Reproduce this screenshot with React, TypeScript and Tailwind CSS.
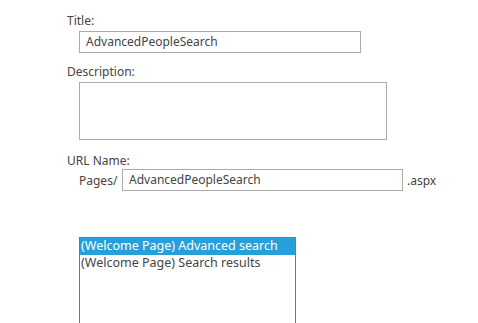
export default function App() {
  return (
    <div className="w-[478px] h-[323px] bg-white overflow-hidden text-[12px] leading-[17px] text-[#444444] font-['Noto_Sans',sans-serif]">
      <div className="pl-[67px] pt-[12px]">
        <div className="h-[19px]">Title:</div>
        <div className="pl-[12px]">
          <div className="w-[282px] h-[22px] border border-[#ababab] px-[6px] leading-[20px] text-[12px]">
            AdvancedPeopleSearch
          </div>
        </div>
        <div className="mt-[10px] h-[19px]">Description:</div>
        <div className="pl-[12px]">
          <div className="w-[308px] h-[58px] border border-[#ababab]" />
        </div>
        <div className="mt-[12px] h-[17px]">URL Name:</div>
        <div className="flex items-center pl-[12px]">
          <span className="w-[43px]">Pages/</span>
          <div className="w-[281px] h-[22px] border border-[#ababab] px-[6px] leading-[20px] text-[12px]">
            AdvancedPeopleSearch
          </div>
          <span className="ml-[4px]">.aspx</span>
        </div>
        <div className="pl-[12px] mt-[46px]">
          <div className="w-[217px] h-[100px] border border-[#2a8dd4]">
            <div className="h-[17px] bg-[#26a0da] text-white pl-[1px] leading-[16px] text-[12.5px]">
              (Welcome Page) Advanced search
            </div>
            <div className="h-[17px] pl-[1px] leading-[16px] text-[12.5px]">
              (Welcome Page) Search results
            </div>
          </div>
        </div>
      </div>
    </div>
  );
}
